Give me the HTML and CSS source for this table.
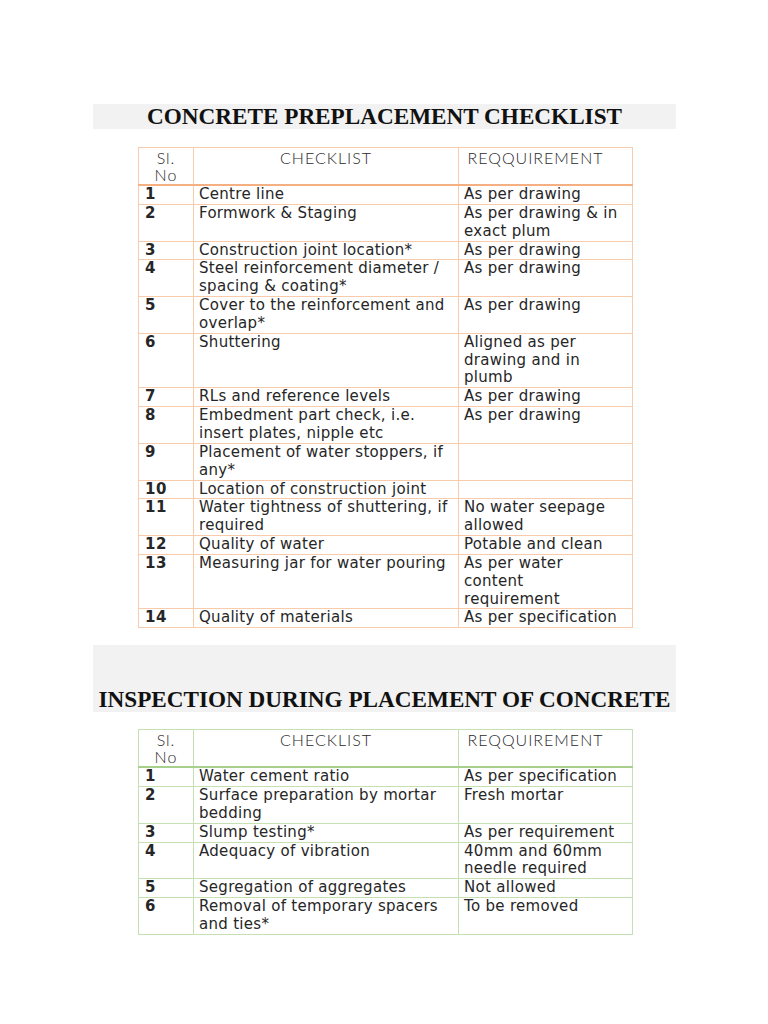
FILE: index.html
```html
<!DOCTYPE html>
<html>
<head>
<meta charset="utf-8">
<link rel="stylesheet" href="styles.css">
</head>
<body>
<div class="page">
  <div class="titlebar first"><h1>CONCRETE PREPLACEMENT CHECKLIST</h1></div>
  <table class="check orange">
    <colgroup><col class="c1"><col class="c2"><col class="c3"></colgroup>
    <thead>
      <tr><th>Sl.<br>No</th><th>CHECKLIST</th><th class="req">REQQUIREMENT</th></tr>
    </thead>
    <tbody>
      <tr><td class="n">1</td><td>Centre line</td><td class="r">As per drawing</td></tr>
      <tr><td class="n">2</td><td>Formwork &amp; Staging</td><td class="r">As per drawing &amp; in exact plum</td></tr>
      <tr><td class="n">3</td><td>Construction joint location*</td><td class="r">As per drawing</td></tr>
      <tr><td class="n">4</td><td>Steel reinforcement diameter / spacing &amp; coating*</td><td class="r">As per drawing</td></tr>
      <tr><td class="n">5</td><td>Cover to the reinforcement and overlap*</td><td class="r">As per drawing</td></tr>
      <tr><td class="n">6</td><td>Shuttering</td><td class="r">Aligned as per drawing and in plumb</td></tr>
      <tr><td class="n">7</td><td>RLs and reference levels</td><td class="r">As per drawing</td></tr>
      <tr><td class="n">8</td><td>Embedment part check, i.e. insert plates, nipple etc</td><td class="r">As per drawing</td></tr>
      <tr><td class="n">9</td><td>Placement of water stoppers, if any*</td><td class="r"></td></tr>
      <tr><td class="n">10</td><td>Location of construction joint</td><td class="r"></td></tr>
      <tr><td class="n">11</td><td>Water tightness of shuttering, if required</td><td class="r">No water seepage allowed</td></tr>
      <tr><td class="n">12</td><td>Quality of water</td><td class="r">Potable and clean</td></tr>
      <tr><td class="n">13</td><td>Measuring jar for water pouring</td><td class="r">As per water content requirement</td></tr>
      <tr><td class="n">14</td><td>Quality of materials</td><td class="r">As per specification</td></tr>
    </tbody>
  </table>

  <div class="titlebar second"><h1>INSPECTION DURING PLACEMENT OF CONCRETE</h1></div>
  <table class="check green">
    <colgroup><col class="c1"><col class="c2"><col class="c3"></colgroup>
    <thead>
      <tr><th>Sl.<br>No</th><th>CHECKLIST</th><th class="req">REQQUIREMENT</th></tr>
    </thead>
    <tbody>
      <tr><td class="n">1</td><td>Water cement ratio</td><td class="r">As per specification</td></tr>
      <tr><td class="n">2</td><td>Surface preparation by mortar bedding</td><td class="r">Fresh mortar</td></tr>
      <tr><td class="n">3</td><td>Slump testing*</td><td class="r">As per requirement</td></tr>
      <tr><td class="n">4</td><td>Adequacy of vibration</td><td class="r">40mm and 60mm needle required</td></tr>
      <tr><td class="n">5</td><td>Segregation of aggregates</td><td class="r">Not allowed</td></tr>
      <tr><td class="n">6</td><td>Removal of temporary spacers and ties*</td><td class="r">To be removed</td></tr>
    </tbody>
  </table>
</div>
</body>
</html>
```

FILE: styles.css
```css
html, body {
  margin: 0;
  padding: 0;
  background: #ffffff;
}

.page {
  width: 583px;
  margin-left: 93px;
  padding-top: 104px;
  display: flex;
  flex-direction: column;
}

.titlebar {
  background: #f2f2f2;
  display: flex;
  justify-content: center;
  align-items: flex-end;
}

.titlebar h1 {
  margin: 0;
  font-family: "Liberation Serif", "Times New Roman", serif;
  font-weight: bold;
  font-size: 23.2px;
  line-height: 25px;
  color: #111111;
  white-space: nowrap;
}

.titlebar.first {
  height: 25px;
}

.titlebar.second {
  height: 67px;
  margin-top: 17px;
}

.check {
  margin-left: 45px;
  width: 494px;
  border-collapse: collapse;
  table-layout: fixed;
  font-family: "DejaVu Sans", Verdana, sans-serif;
  font-size: 15px;
  letter-spacing: 0.3px;
  line-height: 17.85px;
  color: #262626;
}

.orange { margin-top: 18px; }
.green { margin-top: 17px; }

.c1 { width: 55px; }
.c2 { width: 265px; }
.c3 { width: 174px; }

.check th {
  font-family: Lato, "Open Sans", sans-serif;
  font-weight: 300;
  font-size: 16px;
  letter-spacing: 1px;
  line-height: 17px;
  color: #2a2a2a;
  text-align: center;
  vertical-align: top;
  padding: 1px 2px 1px;
  height: 33px;
}

.check th.req {
  padding-right: 22px;
}

.check td {
  vertical-align: top;
  padding: 0 4px 0 5px;
  text-align: left;
}

.check td.r {
  padding-right: 8px;
}

.check td.n {
  font-weight: bold;
  font-size: 15px;
  letter-spacing: 0.5px;
  padding-left: 6px;
}

.orange th, .orange td { border: 1px solid #f8cbad; }
.orange thead th { border-bottom: 2px solid #f4b083; }

.green th, .green td { border: 1px solid #c5e0b3; }
.green thead th { border-bottom: 2px solid #a8d08d; }
```
